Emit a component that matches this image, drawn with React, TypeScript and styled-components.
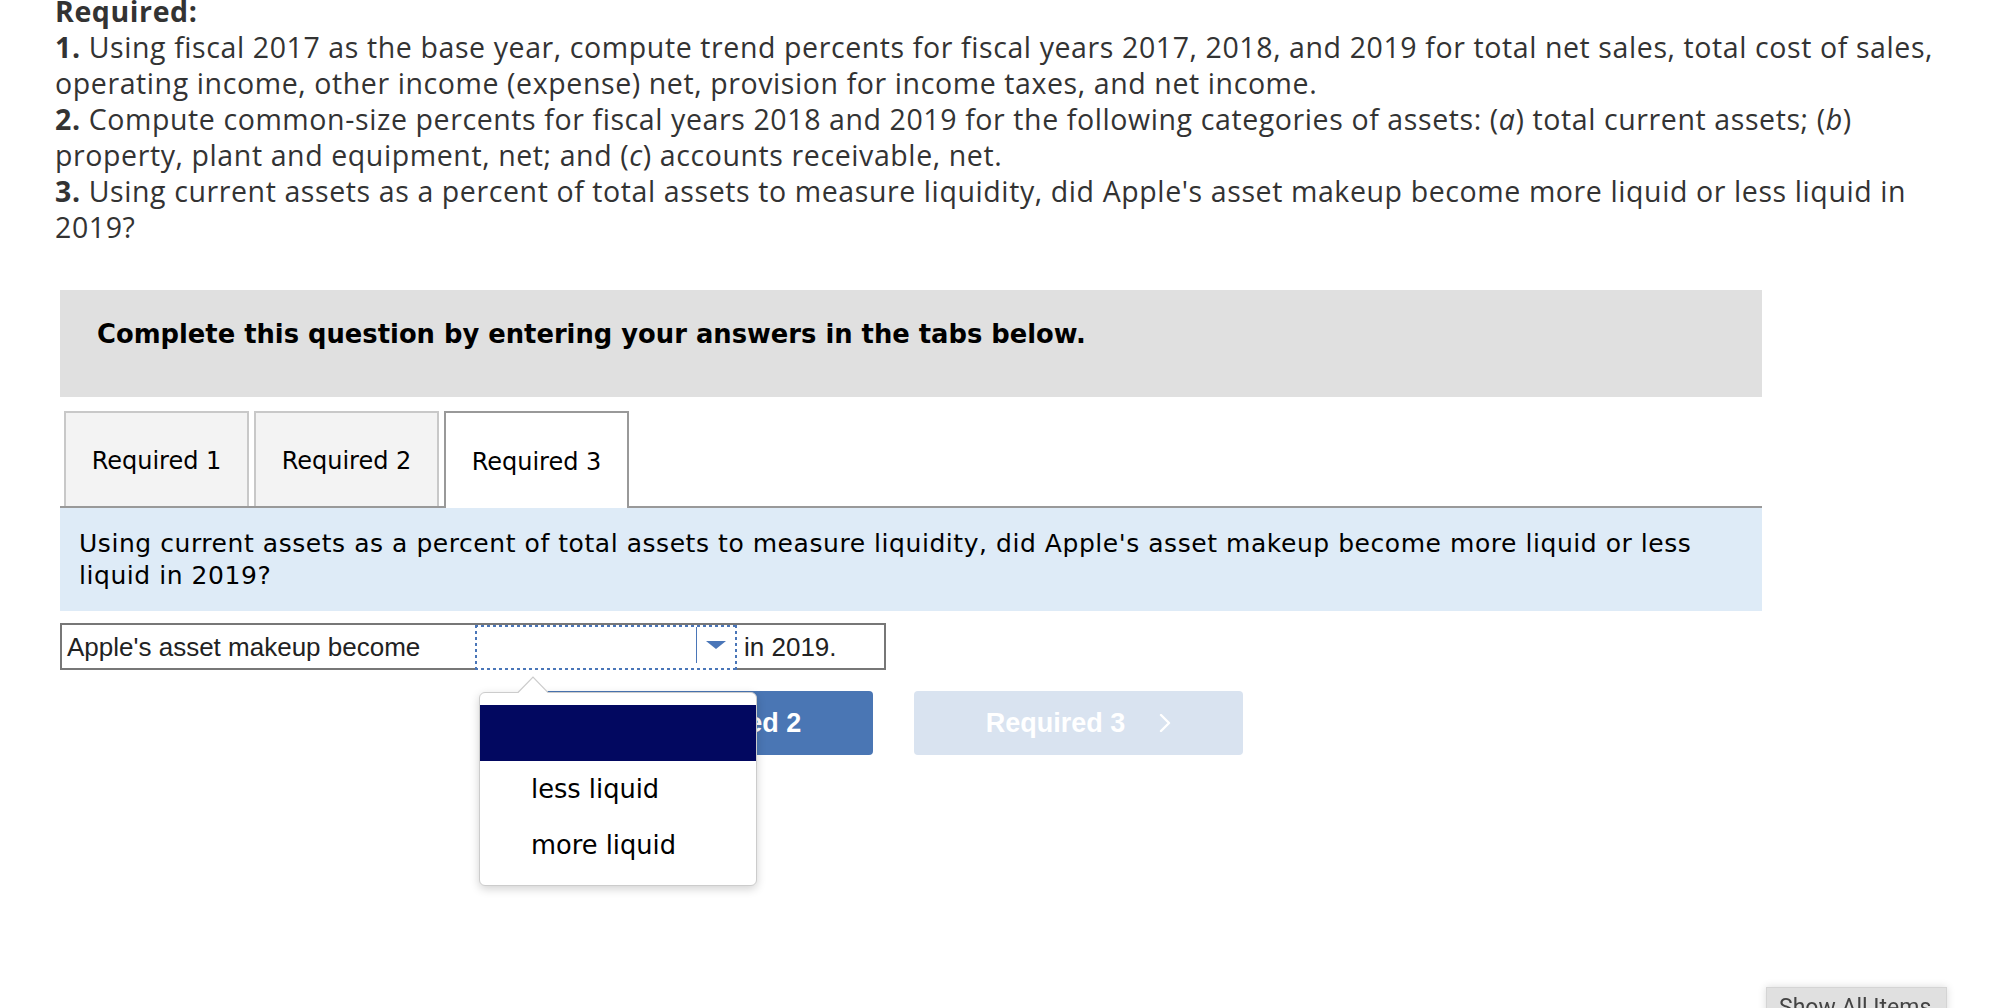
import React from 'react';
import styled, { createGlobalStyle } from 'styled-components';

const Global = createGlobalStyle`
  html, body { margin: 0; padding: 0; background: #ffffff; }
  body { width: 2006px; height: 1008px; overflow: hidden; }
  #root { width: 2006px; }
`;

const Page = styled.div`
  padding-left: 60px;
  width: 1702px;
  display: flex;
  flex-direction: column;
`;

const Instructions = styled.div`
  margin: -7px 0 0 -5px;
  font-family: "Open Sans", Lato, sans-serif;
  font-size: 28.5px;
  letter-spacing: 0.6px;
  line-height: 36px;
  color: #333333;
  white-space: nowrap;
  font-variant-ligatures: none;
`;

const Line = styled.div``;

const B = styled.b`
  font-weight: 700;
`;

const I = styled.i`
  font-style: italic;
`;

const Banner = styled.div`
  margin-top: 45px;
  height: 107px;
  box-sizing: border-box;
  padding: 29px 37px;
  background: #e0e0e0;
  font-family: "DejaVu Sans", Verdana, sans-serif;
  font-weight: 700;
  font-size: 25.8px;
  line-height: 30px;
  color: #000000;
  white-space: nowrap;
`;

const TabRow = styled.div`
  margin-top: 14px;
  display: flex;
  gap: 5px;
  padding-left: 4px;
  border-bottom: 2px solid #999999;
  height: 95px;
`;

const Tab = styled.div<{ $active?: boolean }>`
  width: 185px;
  box-sizing: border-box;
  height: ${(p) => (p.$active ? '97px' : '95px')};
  margin-bottom: ${(p) => (p.$active ? '-2px' : '0')};
  border: 2px solid ${(p) => (p.$active ? '#999999' : '#c8c8c8')};
  border-bottom: none;
  background: ${(p) => (p.$active ? '#ffffff' : '#f3f3f3')};
  display: flex;
  align-items: center;
  justify-content: center;
  padding-top: 3px;
  font-family: "DejaVu Sans", Verdana, sans-serif;
  font-size: 24px;
  line-height: 27px;
  color: #000000;
  white-space: nowrap;
  position: relative;
  z-index: 1;
`;

const Prompt = styled.div`
  height: 103px;
  box-sizing: border-box;
  padding: 20px 19px 0;
  background: #deebf7;
  font-family: "DejaVu Sans", Verdana, sans-serif;
  font-size: 25px;
  letter-spacing: 0.55px;
  line-height: 32px;
  color: #000000;
  white-space: nowrap;
`;

const AnswerRow = styled.div`
  margin-top: 12px;
  width: 826px;
  height: 47px;
  box-sizing: border-box;
  border: 2px solid #777777;
  display: flex;
  align-items: center;
  font-family: "Liberation Sans", Arial, sans-serif;
  font-size: 26px;
  line-height: 28px;
  color: #222222;
`;

const Label = styled.div`
  width: 413px;
  box-sizing: border-box;
  padding-left: 5px;
  white-space: nowrap;
`;

const SelectWrap = styled.div`
  position: relative;
  align-self: flex-start;
  width: 262px;
  height: 45px;
  box-sizing: border-box;
  padding: 2px;
  background:
    linear-gradient(to right, #4a76b8 50%, transparent 0) left top / 6px 2px repeat-x,
    linear-gradient(to right, #4a76b8 50%, transparent 0) left bottom / 6px 2px repeat-x,
    linear-gradient(to bottom, #4a76b8 50%, transparent 0) left top / 2px 6px repeat-y,
    linear-gradient(to bottom, #4a76b8 50%, transparent 0) right top / 2px 6px repeat-y,
    #ffffff;
  display: flex;
`;

const SelectValue = styled.div`
  flex: 1;
  height: 36px;
  border-right: 1px solid #4a76b8;
`;

const ArrowZone = styled.div`
  width: 38px;
  display: flex;
  justify-content: center;
  padding-top: 14px;
  box-sizing: border-box;
`;

const After = styled.div`
  margin-left: 7px;
  white-space: nowrap;
`;

const Popup = styled.div`
  position: absolute;
  left: 4px;
  top: 67px;
  width: 278px;
  height: 194px;
  box-sizing: border-box;
  border: 1px solid #cccccc;
  border-radius: 6px;
  background: #ffffff;
  box-shadow: 0 3px 10px rgba(0, 0, 0, 0.18);
  padding: 12px 0;
  z-index: 5;
`;

const Caret = styled.svg`
  position: absolute;
  left: 36px;
  top: -17px;
`;

const Option = styled.div<{ $selected?: boolean }>`
  height: 56px;
  box-sizing: border-box;
  padding-left: 51px;
  background: ${(p) => (p.$selected ? '#020860' : 'transparent')};
  font-family: "DejaVu Sans", Verdana, sans-serif;
  font-size: 25.7px;
  line-height: 56px;
  color: #000000;
  white-space: nowrap;
`;

const NavRow = styled.div`
  margin-top: 21px;
  margin-left: 484px;
  display: flex;
  gap: 41px;
`;

const NavButton = styled.div<{ $disabled?: boolean }>`
  width: 329px;
  height: 64px;
  border-radius: 4px;
  background: ${(p) => (p.$disabled ? '#d9e3f0' : '#4a76b4')};
  display: flex;
  align-items: center;
  justify-content: center;
  gap: 34px;
  font-family: "Liberation Sans", Arial, sans-serif;
  font-weight: 700;
  font-size: 27px;
  color: #ffffff;
`;

const ShowAll = styled.div`
  position: fixed;
  right: 59px;
  bottom: -20px;
  width: 181px;
  height: 41px;
  box-sizing: border-box;
  padding: 6px 0 0 12px;
  background: #e0e0e0;
  border: 1px solid #d4d4d4;
  box-shadow: 0 0 8px rgba(0, 0, 0, 0.15);
  font-family: Roboto, "Liberation Sans", sans-serif;
  font-size: 23px;
  line-height: 27px;
  color: #444444;
  white-space: nowrap;
`;

const Chevron = ({ left }: { left?: boolean }) => (
  <svg width="12" height="18" viewBox="0 0 12 18">
    <polyline
      points={left ? '10,1 2,9 10,17' : '2,1 10,9 2,17'}
      fill="none"
      stroke="#ffffff"
      strokeWidth="2.4"
      strokeLinecap="round"
      strokeLinejoin="round"
    />
  </svg>
);

export default function App() {
  return (
    <>
      <Global />
      <Page>
        <Instructions>
          <Line><B>Required:</B></Line>
          <Line>
            <B>1.</B> Using fiscal 2017 as the base year, compute trend percents for fiscal years 2017, 2018, and 2019 for total net sales, total cost of sales,
          </Line>
          <Line>operating income, other income (expense) net, provision for income taxes, and net income.</Line>
          <Line>
            <B>2.</B> Compute common-size percents for fiscal years 2018 and 2019 for the following categories of assets: (<I>a</I>) total current assets; (<I>b</I>)
          </Line>
          <Line>property, plant and equipment, net; and (<I>c</I>) accounts receivable, net.</Line>
          <Line>
            <B>3.</B> Using current assets as a percent of total assets to measure liquidity, did Apple's asset makeup become more liquid or less liquid in
          </Line>
          <Line>2019?</Line>
        </Instructions>

        <Banner>Complete this question by entering your answers in the tabs below.</Banner>

        <TabRow>
          <Tab>Required 1</Tab>
          <Tab>Required 2</Tab>
          <Tab $active>Required 3</Tab>
        </TabRow>

        <Prompt>
          Using current assets as a percent of total assets to measure liquidity, did Apple's asset makeup become more liquid or less
          <br />
          liquid in 2019?
        </Prompt>

        <AnswerRow>
          <Label>Apple's asset makeup become</Label>
          <SelectWrap>
            <SelectValue />
            <ArrowZone>
              <svg width="20" height="8" viewBox="0 0 20 8">
                <polygon points="0,0 20,0 10,8" fill="#4a76b8" />
              </svg>
            </ArrowZone>
            <Popup>
              <Caret width="34" height="18" viewBox="0 0 34 18">
                <polygon points="1,17.5 17,1 33,17.5" fill="#ffffff" stroke="#cccccc" strokeWidth="1.2" />
                <rect x="0" y="17" width="34" height="2" fill="#ffffff" />
              </Caret>
              <Option $selected />
              <Option>less liquid</Option>
              <Option>more liquid</Option>
            </Popup>
          </SelectWrap>
          <After>in 2019.</After>
        </AnswerRow>

        <NavRow>
          <NavButton>
            <Chevron left />
            <span>Required 2</span>
          </NavButton>
          <NavButton $disabled>
            <span>Required 3</span>
            <Chevron />
          </NavButton>
        </NavRow>
      </Page>
      <ShowAll>Show All Items</ShowAll>
    </>
  );
}
